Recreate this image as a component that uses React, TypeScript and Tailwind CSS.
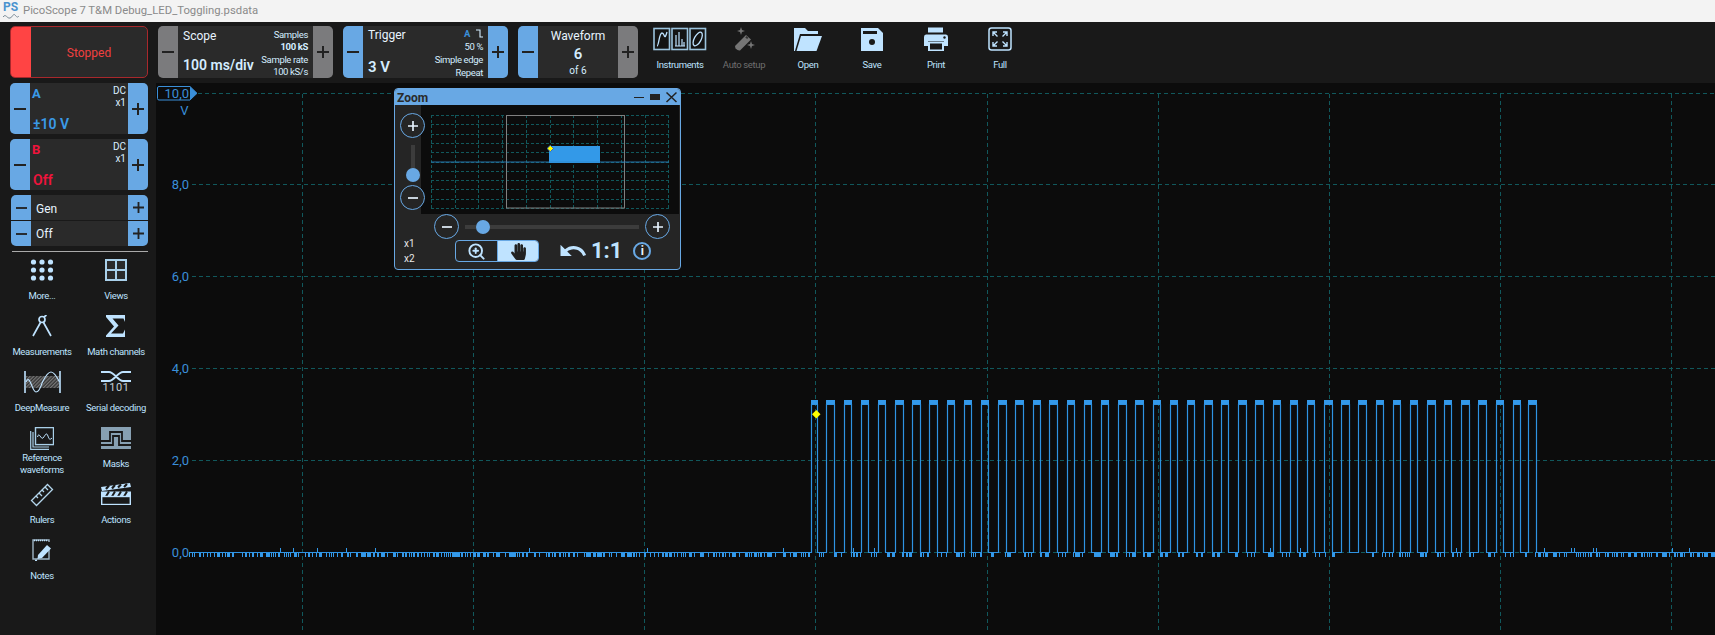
import { ReactNode } from 'react'
import { ZoomIn } from 'lucide-react'
import { FaHandPaper } from 'react-icons/fa'
import { MdUndo } from 'react-icons/md'

const LIGHT = '#bfe3ff'
const WAVE = '#3399ea'
const GRID = '#11585c'

const Plus = ({ size = 12 }: { size?: number }) => (
	<svg width={size} height={size} viewBox="0 0 12 12">
		<path d="M0 6H12M6 0V12" stroke="currentColor" strokeWidth="2" />
	</svg>
)

const Minus = ({ size = 12 }: { size?: number }) => (
	<svg width={size} height={2} viewBox="0 0 12 2">
		<rect width="12" height="2" fill="currentColor" />
	</svg>
)

function Stepper({ color, side, children, h = 'h-full' }: { color: string; side: 'l' | 'r'; children: ReactNode; h?: string }) {
	return (
		<div
			className={`w-[20px] shrink-0 flex items-center justify-center text-[#222] ${h} ${color} ${side === 'l' ? 'rounded-l-[5px]' : 'rounded-r-[5px]'}`}>
			{children}
		</div>
	)
}

function Block({ left, right, width, children }: { left: string; right: string; width: string; children: ReactNode }) {
	return (
		<div className={`flex h-[52px] rounded-[5px] bg-[#2a2a2a] ${width}`}>
			<Stepper color={left} side="l">
				<Minus />
			</Stepper>
			<div className="flex-1 min-w-0 relative">{children}</div>
			<Stepper color={right} side="r">
				<Plus />
			</Stepper>
		</div>
	)
}

function ToolButton({ label, icon, dim }: { label: string; icon: ReactNode; dim?: boolean }) {
	return (
		<div className="w-[64px] flex flex-col items-center">
			<div className="h-[24px] mt-[5px] flex items-center justify-center">{icon}</div>
			<div className={`mt-[8px] text-[9.5px] tracking-[-0.35px] leading-[12px] whitespace-nowrap ${dim ? 'text-[#6f6f6f]' : 'text-[#bfe3ff]'}`}>{label}</div>
		</div>
	)
}

function SideItem({ label, icon }: { label: ReactNode; icon: ReactNode }) {
	return (
		<div className="h-[56px] flex flex-col items-center">
			<div className="h-[24px] mt-[6px] flex items-start justify-center">{icon}</div>
			<div className="h-[28px] flex items-center justify-center text-center text-[9.5px] tracking-[-0.35px] leading-[12px] text-[#bfe3ff] whitespace-nowrap">{label}</div>
		</div>
	)
}

function Channel({ name, value, color }: { name: string; value: string; color: string }) {
	return (
		<div className="flex h-[51px] w-[138px] ml-[10px] bg-[#2a2a2a] rounded-[5px]">
			<Stepper color="bg-[#68a8e4]" side="l">
				<Minus />
			</Stepper>
			<div className="flex-1 relative px-[2px]">
				<div className={`text-[13px] font-bold leading-[16px] mt-[3px] ${color}`}>{name}</div>
				<div className="absolute right-[2px] top-[2px] text-right text-[10px] leading-[12px] text-[#dbeeff]">
					DC
					<br />
					x1
				</div>
				<div className={`absolute left-[3px] bottom-[1px] text-[14px] font-semibold leading-[18px] ${color}`}>{value}</div>
			</div>
			<Stepper color="bg-[#68a8e4]" side="r">
				<Plus />
			</Stepper>
		</div>
	)
}

function GenRow({ label, top }: { label: string; top?: boolean }) {
	return (
		<div className={`flex h-[25px] bg-[#2a2a2a] ${top ? 'rounded-t-[5px]' : 'rounded-b-[5px]'}`}>
			<div className={`w-[20px] flex items-center justify-center bg-[#68a8e4] text-[#222] ${top ? 'rounded-tl-[5px]' : 'rounded-bl-[5px]'}`}>
				<Minus size={11} />
			</div>
			<div className={`flex-1 pl-[5px] text-[12px] leading-[25px] text-[#e8f4ff] ${top ? 'pt-[2px]' : 'pt-[1px]'}`}>{label}</div>
			<div className={`w-[20px] flex items-center justify-center bg-[#68a8e4] text-[#222] ${top ? 'rounded-tr-[5px]' : 'rounded-br-[5px]'}`}>
				<Plus size={11} />
			</div>
		</div>
	)
}

// toolbar icons
const InstrumentsIcon = () => (
	<svg width="54" height="24" viewBox="0 0 54 24" fill="none">
		{[1, 19, 37].map((x) => (
			<rect key={x} x={x} y="1.5" width="15.5" height="21" stroke="#9cc4de" strokeWidth="1.6" fill="#141414" />
		))}
		<path d="M4 19C6 19 6 6 9 6S11 15 14 5" stroke={LIGHT} strokeWidth="1.3" />
		<path d="M22 19H32M23 19V8M26 19V5M29 19V12M31 19V15" stroke={LIGHT} strokeWidth="1.2" />
		<ellipse cx="44.7" cy="12" rx="3.4" ry="7.5" transform="rotate(28 44.7 12)" stroke={LIGHT} strokeWidth="1.3" />
	</svg>
)

const AutoSetupIcon = () => (
	<svg width="26" height="24" viewBox="0 0 26 24" fill="#757575">
		<path d="M4 19L15 8L20 12.5L9 23.5Q7 24 4.5 21.5Z" />
		<rect x="15" y="9.5" width="2.5" height="2" fill="#333" transform="rotate(42 16 10)" />
		<path d="M10 0L11 3L14 4L11 5L10 8L9 5L6 4L9 3ZM20 14L21 17L24 18L21 19L20 22L19 19L16 18L19 17Z" />
	</svg>
)

const OpenIcon = () => (
	<svg width="28" height="24" viewBox="0 0 28 24" fill={LIGHT}>
		<path d="M0 24V1H11L14 4H24V7H6L1.5 22L1 24Z" />
		<path d="M7 9H28L22.5 24H2.5Z" />
	</svg>
)

const SaveIcon = () => (
	<svg width="22" height="24" viewBox="0 0 22 24">
		<path d="M0 1H17L22 6V24H0Z" fill={LIGHT} />
		<rect x="2" y="4" width="14" height="3" fill="#191919" />
		<circle cx="11" cy="15" r="3" fill="#191919" />
	</svg>
)

const PrintIcon = () => (
	<svg width="24" height="24" viewBox="0 0 24 24" fill={LIGHT}>
		<rect x="4" y="0.5" width="15" height="5" />
		<path d="M2 7.5H22Q24 7.5 24 10V19H20V14H4V19H0V10Q0 7.5 2 7.5Z" />
		<path d="M5 15.5H19V23.5H5Z" fill="#191919" stroke={LIGHT} strokeWidth="2" />
		<circle cx="20.5" cy="10.5" r="1.2" fill="#191919" />
	</svg>
)

const FullIcon = () => (
	<svg width="24" height="24" viewBox="0 0 24 24" fill="none" stroke={LIGHT}>
		<rect x="1" y="1" width="22" height="22" rx="2.5" strokeWidth="1.5" />
		<path d="M5 9V5H9M5 5L9.5 9.5M15 5H19V9M19 5L14.5 9.5M5 15V19H9M5 19L9.5 14.5M15 19H19V15M19 19L14.5 14.5" strokeWidth="1.4" />
	</svg>
)

// sidebar icons
const MoreIcon = () => (
	<svg width="24" height="22" viewBox="0 0 24 22" fill={LIGHT}>
		{[3, 11, 19].flatMap((y) => [3.5, 12, 20.5].map((x) => <circle key={`${x}-${y}`} cx={x} cy={y} r="2.6" />))}
	</svg>
)

const ViewsIcon = () => (
	<svg width="22" height="22" viewBox="0 0 22 22" fill="#2a2a2a" stroke="#a9d0ea" strokeWidth="2">
		<rect x="1" y="1" width="20" height="20" />
		<path d="M11 1V21M1 11H21" />
	</svg>
)

const CompassIcon = () => (
	<svg width="22" height="22" viewBox="0 0 22 22" fill="none" stroke={LIGHT} strokeWidth="1.7">
		<circle cx="11" cy="4.5" r="3" />
		<path d="M9.5 7.5L2 21M12.5 7.5L20 21" />
		<path d="M13 2L15.5 0" />
	</svg>
)

const SigmaIcon = () => (
	<svg width="20" height="22" viewBox="0 0 20 22" fill={LIGHT}>
		<path d="M0 0H19V7L17.5 3.5H6.5L12.5 10.5L5 18.5H17L19 14.5V22H0V20.5L8 11.5L0 2Z" />
	</svg>
)

const DeepMeasureIcon = () => (
	<svg width="37" height="23" viewBox="0 0 37 23" fill="none">
		<defs>
			<pattern id="hatch" width="2.5" height="2.5" patternUnits="userSpaceOnUse" patternTransform="rotate(45)">
				<rect width="2.5" height="2.5" fill="#333" />
				<rect width="1.2" height="2.5" fill="#777" />
			</pattern>
		</defs>
		<rect x="2" y="5" width="33" height="12" fill="url(#hatch)" />
		<path d="M1 0V22M36 0V22" stroke={LIGHT} strokeWidth="1.6" />
		<path d="M2 11C6 2 8 21 12 21S17 14 18.5 11S24 1 27 1S33 6 35.5 11" stroke={LIGHT} strokeWidth="1.2" />
	</svg>
)

const SerialIcon = () => (
	<div className="flex flex-col items-center">
		<svg width="30" height="11" viewBox="0 0 30 11" fill="none" stroke={LIGHT} strokeWidth="2">
			<path d="M0 1H8C13 1 17 10 22 10H30M0 10H8C13 10 17 1 22 1H30" />
		</svg>
		<div className="text-[11px] leading-[12px] tracking-[0.6px] text-[#c4cfd6]">1101</div>
	</div>
)

const RefIcon = () => (
	<svg width="24" height="23" viewBox="0 0 24 23" fill="none" stroke="#a9cfe8" strokeWidth="1.2">
		<rect x="5.5" y="0.6" width="18" height="17" strokeWidth="1.4" />
		<path d="M0.7 4V22.3H19" />
		<path d="M3 5V20H19" />
		<path d="M7.5 10C9 4 11 13 13 11S16 5 17.5 8S19 14 22 11" stroke={LIGHT} strokeWidth="1" />
	</svg>
)

const MasksIcon = () => (
	<svg width="30" height="22" viewBox="0 0 30 22">
		<rect width="30" height="22" fill="#87a0b2" />
		<path d="M0 14H9V5H21V14H30M0 18H12V9H18V18H30" fill="none" stroke="#191919" strokeWidth="1.8" />
	</svg>
)

const RulerIcon = () => (
	<svg width="24" height="24" viewBox="0 0 24 24" fill="none" stroke="#b4d6ec" strokeWidth="1.3">
		<path d="M17.5 1.5L22.5 6.5L6.5 22.5L1.5 17.5Z" />
		<path d="M6 13L8 15M9 10L12 13M12 7L14 9M15 4L18 7" />
	</svg>
)

const ClapIcon = () => (
	<svg width="30" height="22" viewBox="0 0 30 22">
		<path d="M0 4L29 0L30 4L1 8Z" fill={LIGHT} />
		<path d="M5 6L8 2.5M11 5.5L14 2M17 4.5L20 1.5M23 4L26 1" stroke="#191919" strokeWidth="2.2" />
		<rect x="0" y="8.5" width="30" height="5" fill={LIGHT} />
		<path d="M5 13.5L8 8.5M11 13.5L14 8.5M17 13.5L20 8.5M23 13.5L26 8.5" stroke="#191919" strokeWidth="2" />
		<rect x="0.7" y="13.5" width="28.6" height="8" fill="#191919" stroke={LIGHT} strokeWidth="1.4" />
	</svg>
)

const NotesIcon = () => (
	<svg width="20" height="22" viewBox="0 0 20 22" fill="none">
		<path d="M17 9V20H1V1H17V3" stroke="#9fb6c6" strokeWidth="1.4" />
		<path d="M2 1.5H16" stroke={LIGHT} strokeWidth="1.4" strokeDasharray="1 1" />
		<path d="M6 16L15 6L19 9.5L10 19L5.5 20Z" fill={LIGHT} />
		<path d="M5 21.2L3 21.5" stroke={LIGHT} strokeWidth="1.4" />
	</svg>
)

// ticks read off the trace, "a-b" is a block and "a" a one pixel tick, in 3x crop units from base
const parseTicks = (base: number, spec: string) =>
	spec.split(' ').map((t) => {
		const [a, b] = t.split('-').map(Number)
		return { x: Math.round(base + a / 3), w: b ? Math.max(1, Math.round((b - a) / 3)) : 1 }
	})

const NOISE = [
	...parseTicks(
		140,
		'148 156 162 177-183 190 202 211 222 232-240 247 256 262-270 276-282 307 316-321 327 337-342 352 360-369 378-390 393 399 405 414-420 433 438 444 450 462-471 474 495 505-510 517 528 537-546 558 567 573 579 591 603-609 621-627 630 648-654 663-678 681-693 699-705 711-717 723-735 741 759-769 771 786-792 795-801 807 813 819-825 831-837 843-846 852 861 867 879-885 888-897',
	),
	...parseTicks(
		440,
		'3 12 18 24-27 30-33 36-60 63-70 75 81 90 99-108 111-120 129-138 141-147 159 168-180 195 207-228 231 237 246-252 258-264 282-288 297 318 324-330 336 342-348 357-363 369 375 384-390 399-405 411 432 438-453 459-468 471-486 489-495 507 513 528 543-555 561-576 579-585 588 597 612-618 630 642 654 666-672 675-684 687-696 702 711 723 729 735 747-756 762 780-792 804 819-825 828 837 846-852 855 867 876-888 897 915-924 927 933 942-951 954 960-966 972 981-996 1005',
	),
	...parseTicks(
		780,
		'9-18 30-33 39-51 63 69 75 84-90 117 123 129 162-171 183 213 219-225 228-234 240 273 282 288 321-330 336-345 366-372 378-384 387-396 420-426 429-432 441-447 471 483 498 528-540 543 552 573 579 585 600-606 633-642 675 681-693 732-738 744 753 780-786 795-807 834 846 855 879 885-897',
	),
	...parseTicks(
		1075,
		'0-6 9-15 21 57-78 105-120 123-129 153 162 171-183 204-210 216-228 255-264 270-279 309-315 321-327 363-369 378-384 411-420 426-435 480-489 516 528 537 579-597 621 633 642 672-678 684-693 720 732 750 771-780 891-897 921 930 942 951 972 981 990',
	),
	...parseTicks(
		1400,
		'0-3 15 21 27 60-72 75-81 111-117 120 132 156-162 171 180 207-213 219 264-273 282 315 330 339 375-381 405 414-423 429 435-444 459-471 477 492 498 528 534 540 549 555 564 570-576 588-594 597 615 621-627 636 642 648-654 663 669 684-693 702-711 723-729 732 741 747 753 768-774 786-801 807 822-828 831 840-849 852 870-876 879 891-900 906 912-924 933-945',
	),
]

const SPIKES = [280, 293, 317, 346, 375, 529, 647, 783, 853, 874, 1270, 1300, 1456, 1544, 1571, 1574, 1593, 1596, 1672, 1689]

const RISES = [
	811, 826, 844, 861, 878, 895, 912, 929, 947, 964, 981, 998, 1015, 1033, 1049, 1067, 1084, 1101, 1118, 1135, 1153, 1170, 1187, 1204, 1221, 1238,
	1255, 1273, 1290, 1307, 1324, 1341, 1358, 1376, 1393, 1410, 1427, 1444, 1461, 1478, 1496, 1513, 1528,
]
const FALLS = [
	817, 834, 851, 868, 885, 903, 920, 937, 954, 971, 988, 1006, 1023, 1040, 1057, 1074, 1091, 1108, 1126, 1143, 1160, 1177, 1194, 1212, 1228, 1246,
	1263, 1280, 1297, 1314, 1332, 1349, 1366, 1383, 1400, 1417, 1435, 1451, 1469, 1486, 1503, 1520, 1536,
]

const tracePath = `M189 552.5${RISES.map((r, i) => `H${r}.5V404.5H${FALLS[i]}.5V552.5`).join('')}H1715`

const H_GRID = [93.5, 184.5, 276.5, 368.5, 460.5, 552.5]
const V_GRID = [302.5, 473.5, 644.5, 815.5, 987.5, 1158.5, 1329.5, 1500.5, 1671.5]
const Y_LABELS = [
	{ t: '8,0', y: 184.5 },
	{ t: '6,0', y: 276.5 },
	{ t: '4,0', y: 368.5 },
	{ t: '2,0', y: 460.5 },
	{ t: '0,0', y: 552.5 },
]

function Trace() {
	return (
		<svg className="block w-full h-full" viewBox="156 83 1559 552">
			{H_GRID.map((y) => (
				<line key={y} x1={y === 93.5 ? 198 : 192} x2="1715" y1={y} y2={y} stroke={GRID} strokeDasharray="4 3" />
			))}
			{V_GRID.map((x) => (
				<line key={x} x1={x} x2={x} y1="94" y2="631" stroke={GRID} strokeDasharray="4 3" />
			))}
			<path d="M157.5 88Q157.5 86.5 159 86.5H190L197 93.3L190 100H159Q157.5 100 157.5 98.5Z" fill="#0c0c0c" stroke="#3a8fd9" />
			<path d="M190 86.5L197 93.3L190 100Z" fill="#3a8fd9" />
			<text x="189" y="97.5" textAnchor="end" fontSize="13" fill="#3a8fd9">
				10,0
			</text>
			<text x="184.5" y="115" textAnchor="middle" fontSize="13" fill="#3a8fd9">
				V
			</text>
			{Y_LABELS.map((l) => (
				<text key={l.t} x="189" y={l.y + 4.5} textAnchor="end" fontSize="13" fill="#3a8fd9">
					{l.t}
				</text>
			))}
			{NOISE.map((n, i) => (
				<rect key={i} x={n.x} y="552" width={n.w} height="5" fill={WAVE} />
			))}
			{SPIKES.map((x) => (
				<rect key={x} x={x} y="548" width="1" height="4" fill={WAVE} />
			))}
			{RISES.map((r, i) => (
				<rect key={r} x={r} y="400" width={FALLS[i] - r + 1} height="5" fill={WAVE} />
			))}
			<path d={tracePath} fill="none" stroke="#2f93e2" strokeWidth="1.2" />
			<path d="M816.3 410L820.5 414.3L816.3 418.6L812 414.3Z" fill="#ffff00" />
		</svg>
	)
}

function MiniPlot() {
	const vs = Array.from({ length: 11 }, (_, i) => Math.round(10 + i * 23.73) + 0.5)
	const hs = Array.from({ length: 11 }, (_, i) => Math.round(10 + i * 9.3) + 0.5)
	return (
		<svg width="258" height="109" viewBox="0 0 258 109" className="block bg-[#0c0c0c]">
			{hs.map((y) => (
				<line key={y} x1="10" x2="248" y1={y} y2={y} stroke={GRID} strokeDasharray="3 2" />
			))}
			{vs.map((x) => (
				<line key={x} x1={x} x2={x} y1="10" y2="104" stroke={GRID} strokeDasharray="3 2" />
			))}
			<rect x="85.5" y="10.5" width="118" height="92.5" fill="none" stroke="#808080" />
			<rect x="128" y="41" width="51" height="17" fill="#3399e8" />
			<line x1="10" x2="248" y1="57" y2="57" stroke="#2f88cc" strokeWidth="0.8" />
			<path d="M129.3 40.3L132.5 43.5L129.3 46.7L126 43.5Z" fill="#ffff00" stroke="#1a4fd0" strokeWidth="0.8" />
		</svg>
	)
}

function RoundBtn({ children }: { children: ReactNode }) {
	return (
		<div className="w-[25px] h-[25px] shrink-0 rounded-full border border-[#68a8e4] bg-[#252525] flex items-center justify-center text-[#e8f4ff]">
			{children}
		</div>
	)
}

function ZoomWindow() {
	return (
		<div className="absolute left-[238px] top-[5px] w-[287px] h-[182px] rounded-[4px] border border-[#68a8e4] bg-[#252525] overflow-hidden">
			<div className="h-[16px] bg-[#68a8e4] flex items-center text-[#2a2a2a]">
				<div className="ml-[2px] pt-[1px] text-[12px] font-bold leading-[16px]">Zoom</div>
				<svg className="ml-auto mr-[3px]" width="43" height="12" viewBox="0 0 43 12" fill="#222">
					<rect x="0" y="6" width="10" height="1" />
					<rect x="16" y="3" width="10" height="6" />
					<path d="M32.5 1.5L42.5 11M42.5 1.5L32.5 11" stroke="#222" strokeWidth="1.5" />
				</svg>
			</div>
			<div className="flex h-[109px]">
				<div className="w-[26px] shrink-0 relative z-10 pl-[5px] pt-[8px]">
					<RoundBtn>
						<Plus size={10} />
					</RoundBtn>
					<div className="h-[47px] relative">
						<div className="absolute left-[10.5px] top-[7px] w-[4px] h-[32px] bg-[#3c3c3c]" />
						<div className="absolute left-[5.5px] top-[30px] w-[14px] h-[14px] rounded-full bg-[#68a8e4]" />
					</div>
					<RoundBtn>
						<Minus size={10} />
					</RoundBtn>
				</div>
				<MiniPlot />
			</div>
			<div className="flex items-center h-[25px] pl-[39px]">
				<RoundBtn>
					<Minus size={10} />
				</RoundBtn>
				<div className="relative w-[174px] h-[4px] mx-[6px] bg-[#3c3c3c]">
					<div className="absolute left-[11px] -top-[5px] w-[14px] h-[14px] rounded-full bg-[#68a8e4]" />
				</div>
				<RoundBtn>
					<Plus size={10} />
				</RoundBtn>
			</div>
			<div className="flex items-center h-[22px] mt-[1px]">
				<div className="w-[51px] ml-[9px] text-[10px] leading-[15px] text-[#e8e8e8]">
					x1
					<br />
					x2
				</div>
				<div className="flex w-[84px] h-[22px] rounded-[4px] border border-[#68a8e4] overflow-hidden">
					<div className="w-[42px] flex items-center justify-center text-[#bfe3ff] border-r border-[#68a8e4]">
						<ZoomIn size={19} strokeWidth={2.4} />
					</div>
					<div className="flex-1 bg-[#bfe3ff] flex items-center justify-center text-[#222]">
						<FaHandPaper size={17} />
					</div>
				</div>
				<MdUndo className="ml-[19px] text-[#bfe3ff]" size={30} />
				<div className="ml-[3px] text-[22px] leading-[22px] font-bold text-[#bfe3ff]">1:1</div>
				<div className="ml-[11px] w-[18px] h-[18px] rounded-full border-2 border-[#68a8e4] flex items-center justify-center text-[12px] leading-none font-bold text-[#e8f4ff]">
					i
				</div>
			</div>
		</div>
	)
}

function App() {
	return (
		<div className="w-[1715px] h-screen overflow-hidden flex flex-col bg-[#191919] font-['Roboto',sans-serif]">
			<div className="h-[22px] shrink-0 bg-[#f3f3f3] flex items-center">
				<div className="relative w-[16px] h-[18px] ml-[3px]">
					<span className="absolute left-0 -top-[1px] text-[12px] leading-[12px] font-bold text-[#4b93cf]">PS</span>
					<svg className="absolute left-0 bottom-0" width="16" height="7" viewBox="0 0 16 7" fill="none">
						<path d="M0 4C3 0 4 6 7 5S10 0 12 2S14 5 16 3" stroke="#7a8a96" />
					</svg>
				</div>
				<div className="ml-[4px] text-[11.3px] text-[#8a8a8a] whitespace-nowrap">PicoScope 7 T&amp;M Debug_LED_Toggling.psdata</div>
			</div>

			<div className="h-[61px] shrink-0 flex pt-[4px]">
				<div className="ml-[10px] w-[138px] h-[52px] flex rounded-[5px] border border-[#a8282c] bg-[#2a2a2a] overflow-hidden">
					<div className="w-[20px] bg-[#ff4444]" />
					<div className="flex-1 flex items-center justify-center pt-[2px] text-[12px] text-[#f04040]">Stopped</div>
				</div>
				<div className="ml-[10px]">
					<Block left="bg-[#7b7b7d]" right="bg-[#7b7b7d]" width="w-[175px]">
						<div className="pl-[5px] pt-[1px] text-[12px] leading-[18px] text-[#e8f4ff]">Scope</div>
						<div className="absolute left-[5px] bottom-[4px] text-[14px] font-semibold leading-[18px] text-[#d4edff] whitespace-nowrap">100 ms/div</div>
						<div className="absolute right-[5px] top-[3px] text-right text-[9.5px] tracking-[-0.35px] leading-[12.3px] text-[#d4edff] whitespace-nowrap">
							Samples
							<br />
							<span className="font-bold">100 kS</span>
							<br />
							Sample rate
							<br />
							100 kS/s
						</div>
					</Block>
				</div>
				<div className="ml-[10px]">
					<Block left="bg-[#68a8e4]" right="bg-[#68a8e4]" width="w-[165px]">
						<div className="pl-[5px] text-[12px] leading-[18px] text-[#e8f4ff]">Trigger</div>
						<div className="absolute left-[5px] bottom-[1px] text-[15px] font-semibold leading-[20px] text-[#d4edff]">3 V</div>
						<div className="absolute right-[5px] top-[1px] text-right text-[9.5px] tracking-[-0.35px] leading-[13px] text-[#d4edff] whitespace-nowrap">
							<div className="flex justify-end items-center gap-[6px]">
								<span className="font-bold text-[#3a8fd9]">A</span>
								<svg width="7" height="9" viewBox="0 0 7 9" fill="none" stroke="#d4edff" strokeWidth="1.1">
									<path d="M0 1H4V8H7" />
								</svg>
							</div>
							50 %
							<br />
							Simple edge
							<br />
							Repeat
						</div>
					</Block>
				</div>
				<div className="ml-[10px]">
					<Block left="bg-[#68a8e4]" right="bg-[#7b7b7d]" width="w-[120px]">
						<div className="flex flex-col items-center text-[#d4edff]">
							<div className="text-[12px] leading-[18px] mt-[1px] text-[#e8f4ff]">Waveform</div>
							<div className="text-[15px] font-semibold leading-[16px] mt-[1px]">6</div>
							<div className="text-[10px] leading-[14px] mt-[2px]">of 6</div>
						</div>
					</Block>
				</div>
				<div className="ml-[10px] flex -mt-[4px]">
					<ToolButton label="Instruments" icon={<InstrumentsIcon />} />
					<ToolButton label="Auto setup" icon={<AutoSetupIcon />} dim />
					<ToolButton label="Open" icon={<OpenIcon />} />
					<ToolButton label="Save" icon={<SaveIcon />} />
					<ToolButton label="Print" icon={<PrintIcon />} />
					<ToolButton label="Full" icon={<FullIcon />} />
				</div>
			</div>

			<div className="flex-1 min-h-0 flex">
				<div className="w-[156px] shrink-0">
					<Channel name="A" value="±10 V" color="text-[#3a9ae8]" />
					<div className="h-[5px]" />
					<Channel name="B" value="Off" color="text-[#f0143c]" />
					<div className="ml-[11px] w-[137px] mt-[5px] flex flex-col gap-[1px]">
						<GenRow label="Gen" top />
						<GenRow label="Off" />
					</div>
					<div className="ml-[12px] w-[136px] h-px mt-[5px] bg-[#aaaaaa]" />
					<div className="grid grid-cols-2 w-[148px] ml-[5px] mt-px">
						<SideItem label="More..." icon={<MoreIcon />} />
						<SideItem label="Views" icon={<ViewsIcon />} />
						<SideItem label="Measurements" icon={<CompassIcon />} />
						<SideItem label="Math channels" icon={<SigmaIcon />} />
						<SideItem label="DeepMeasure" icon={<DeepMeasureIcon />} />
						<SideItem label="Serial decoding" icon={<SerialIcon />} />
						<SideItem
							label={
								<>
									Reference
									<br />
									waveforms
								</>
							}
							icon={<RefIcon />}
						/>
						<SideItem label="Masks" icon={<MasksIcon />} />
						<SideItem label="Rulers" icon={<RulerIcon />} />
						<SideItem label="Actions" icon={<ClapIcon />} />
						<SideItem label="Notes" icon={<NotesIcon />} />
					</div>
				</div>
				<div className="flex-1 min-w-0 relative bg-[#0c0c0c]">
					<Trace />
					<ZoomWindow />
				</div>
			</div>
		</div>
	)
}

export default App
